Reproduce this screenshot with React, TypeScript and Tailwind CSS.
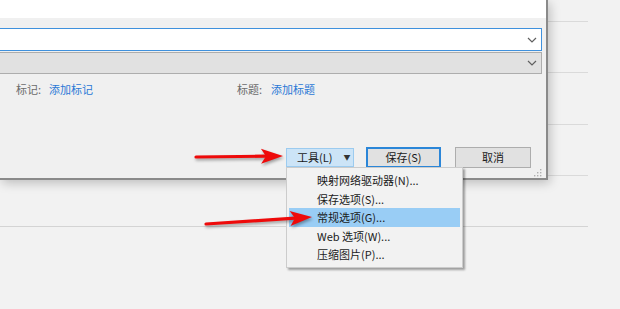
import React from "react";

const font = { fontFamily: '"Noto Sans CJK SC", "Microsoft YaHei", "Noto Sans", sans-serif' };

function Chevron() {
  return (
    <svg width="10" height="6" viewBox="0 0 10 6" className="block">
      <polyline points="1,1 5,5 9,1" fill="none" stroke="#606060" strokeWidth="1.2" />
    </svg>
  );
}

function Arrow({ x1, y1, x2, y2 }: { x1: number; y1: number; x2: number; y2: number }) {
  const dx = x2 - x1;
  const dy = y2 - y1;
  const len = Math.sqrt(dx * dx + dy * dy);
  const ux = dx / len;
  const uy = dy / len;
  const hl = 22;
  const hw = 7.5;
  const bx = x2 - ux * hl;
  const by = y2 - uy * hl;
  const nx = -uy;
  const ny = ux;
  const notchX = x2 - ux * (hl - 5);
  const notchY = y2 - uy * (hl - 5);
  const pts = `${x2},${y2} ${bx + nx * hw},${by + ny * hw} ${notchX},${notchY} ${bx - nx * hw},${by - ny * hw}`;
  return (
    <g>
      <line x1={x1} y1={y1} x2={notchX} y2={notchY} stroke="#ee0a0a" strokeWidth="3.2" strokeLinecap="round" />
      <polygon points={pts} fill="#ee0a0a" />
    </g>
  );
}

export default function App() {
  const menu = ["映射网络驱动器(N)...", "保存选项(S)...", "常规选项(G)...", "Web 选项(W)...", "压缩图片(P)..."];
  return (
    <div className="relative w-[620px] h-[309px] overflow-hidden bg-[#f2f2f2] text-[11px] text-[#1a1a1a]" style={font}>
      {/* background list rows */}
      <div className="flex flex-col w-[588px]">
        <div className="h-[22px] border-b border-[#dadada]" />
        <div className="h-[51px] border-b border-[#dadada]" />
        <div className="h-[52px] border-b border-[#dadada]" />
        <div className="h-[51px] border-b border-[#dadada]" />
        <div className="h-[51px] border-b border-[#d4d4d4]" />
      </div>

      {/* dialog window */}
      <div className="absolute left-0 top-0 w-[548px] h-[180px] bg-[#f0f0f0] border-r-2 border-b-2 border-[#8a8a8a] shadow-[2px_3px_10px_rgba(0,0,0,0.22)] flex flex-col">
        <div className="h-[18px] bg-white shrink-0" />
        <div className="h-[10px] shrink-0" />
        <div className="h-[23px] w-[542px] bg-white border border-l-0 border-[#3f91dd] flex items-center justify-end pr-[4px] shrink-0">
          <Chevron />
        </div>
        <div className="h-[1px] shrink-0" />
        <div className="h-[22px] w-[542px] bg-[#e1e1e1] border border-l-0 border-[#adadad] flex items-center justify-end pr-[4px] shrink-0">
          <Chevron />
        </div>
        <div className="h-[30px] flex items-center shrink-0 pt-[0px]">
          <span className="ml-[16px] w-[33px] text-[#6b6b6b]">标记:</span>
          <span className="w-[188px] text-[#2a78d6]">添加标记</span>
          <span className="w-[34px] text-[#6b6b6b]">标题:</span>
          <span className="text-[#2a78d6]">添加标题</span>
        </div>
        <div className="h-[43px] shrink-0" />
        <div className="flex items-center h-[21px] shrink-0">
          <div className="ml-[286px] w-[68px] h-[19px] bg-[#cce4f7] border border-[#9ccbef] flex items-center">
            <span className="ml-[10px] leading-none">工具(L)</span>
            <span className="ml-[11px] text-[7px] leading-none text-[#333]">▼</span>
          </div>
          <div className="ml-[12px] w-[75px] h-[21px] bg-[#e1e1e1] border-2 border-[#2b86d8] flex items-center justify-center leading-none">
            保存(S)
          </div>
          <div className="ml-[14px] w-[76px] h-[21px] bg-[#e1e1e1] border border-[#adadad] flex items-center justify-center leading-none">
            取消
          </div>
        </div>
        <div className="flex-1 flex justify-end items-end pr-[4px] pb-[1px]">
          <svg width="8" height="8" viewBox="0 0 8 8">
            <rect x="6" y="0" width="1.4" height="1.4" fill="#b0b0b0" />
            <rect x="3" y="3" width="1.4" height="1.4" fill="#b0b0b0" />
            <rect x="6" y="3" width="1.4" height="1.4" fill="#b0b0b0" />
            <rect x="0" y="6" width="1.4" height="1.4" fill="#b0b0b0" />
            <rect x="3" y="6" width="1.4" height="1.4" fill="#b0b0b0" />
            <rect x="6" y="6" width="1.4" height="1.4" fill="#b0b0b0" />
          </svg>
        </div>
      </div>

      {/* dropdown menu */}
      <div className="absolute left-[286px] top-[167px] w-[177px] h-[101px] bg-[#f2f2f2] border border-[#cccccc] shadow-[2px_2px_2px_rgba(0,0,0,0.35)] py-[3px] px-[2px] flex flex-col">
        {menu.map((m, i) => (
          <div key={m} className={`h-[19px] flex items-center pl-[28px] ${i === 2 ? "bg-[#99cdf5]" : ""}`}>
            {m}
          </div>
        ))}
      </div>

      {/* annotation arrows */}
      <svg className="absolute left-0 top-0 pointer-events-none" width="620" height="309" style={{ filter: "drop-shadow(1px 2px 1.5px rgba(0,0,0,0.35))" }}>
        <Arrow x1={196} y1={157} x2={283} y2={156} />
        <Arrow x1={206} y1={224} x2={312} y2={217} />
      </svg>
    </div>
  );
}
